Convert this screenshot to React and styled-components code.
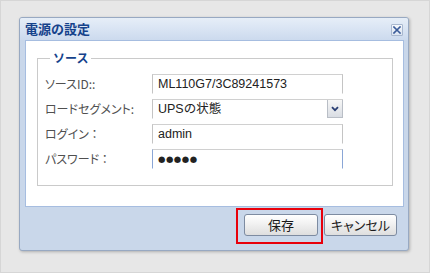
import React from 'react';
import styled, { createGlobalStyle } from 'styled-components';

const GlobalStyle = createGlobalStyle`
  html, body {
    margin: 0;
    padding: 0;
    background: #e8e8e8;
  }
  body {
    font-family: "Liberation Sans", "Noto Sans CJK JP", sans-serif;
  }
`;

const Page = styled.div`
  box-sizing: border-box;
  width: 430px;
  height: 273px;
  padding: 16px 0 0 18px;
  background: #e7e7e7;
  border: 1px solid #d6d6d6;
`;

const Dialog = styled.div`
  box-sizing: border-box;
  width: 390px;
  height: 234px;
  display: flex;
  flex-direction: column;
  background: #c9d7ea;
  border: 1px solid #98a9c2;
  border-radius: 3px;
  box-shadow: 1px 1px 3px rgba(0, 0, 0, 0.25);
`;

const TitleBar = styled.div`
  height: 22px;
  display: flex;
  align-items: center;
  justify-content: space-between;
  padding: 0 5px 0 5px;
  background: linear-gradient(#e6eef8, #ccdaee);
  border-radius: 2px 2px 0 0;
`;

const Title = styled.div`
  font-family: "Noto Sans CJK JP", sans-serif;
  font-size: 13px;
  font-weight: bold;
  color: #15428b;
  line-height: 16px;
`;

const CloseButton = styled.div`
  box-sizing: border-box;
  width: 12px;
  height: 12px;
  margin-top: 1px;
  display: flex;
  align-items: center;
  justify-content: center;
  background: linear-gradient(#f4f7fb, #dbe4f1);
  border: 1px solid #a9b8cf;
  border-radius: 1px;
`;

const Body = styled.div`
  margin: 0 4px 0 5px;
  padding: 9px 10px 20px 11px;
  background: #fff;
  border: 1px solid #a6bde0;
`;

const Fieldset = styled.fieldset`
  margin: 0;
  padding: 8px 7px 16px 7px;
  border: 1px solid #cacaca;
`;

const Legend = styled.legend`
  margin-left: 5px;
  padding: 0 3px;
  font-family: "Noto Sans CJK JP", sans-serif;
  font-size: 12px;
  font-weight: bold;
  line-height: 16px;
  color: #15428b;
`;

const Form = styled.div`
  display: grid;
  grid-template-columns: 107px 191px;
  grid-auto-rows: 20px;
  row-gap: 5px;
  align-items: center;
`;

const Label = styled.div`
  font-family: "Noto Sans CJK JP", sans-serif;
  font-feature-settings: "palt";
  font-size: 12px;
  color: #505050;
  line-height: 20px;
  white-space: nowrap;
`;

const Field = styled.div`
  box-sizing: border-box;
  width: 191px;
  height: 20px;
  padding: 0 0 0 5px;
  font-family: ${(p) => (p.$masked ? '"DejaVu Sans", sans-serif' : '"Liberation Sans", "Noto Sans CJK JP", sans-serif')};
  font-size: ${(p) => (p.$masked ? '8.5px' : '12.5px')};
  letter-spacing: ${(p) => (p.$masked ? '0.5px' : '0')};
  line-height: 19px;
  color: #222;
  background: #fff;
  border: 1px solid #d0d0d0;
  border-bottom-color: #fff;
  border-left-color: ${(p) => (p.$focused ? '#8aa6d6' : '#c4c4c4')};
  border-right-color: ${(p) => (p.$focused ? '#8aa6d6' : '#c4c4c4')};
  white-space: nowrap;
  overflow: hidden;
`;

const Select = styled.div`
  box-sizing: border-box;
  width: 191px;
  height: 20px;
  display: flex;
  align-items: stretch;
  border: 1px solid #d0d0d0;
  border-bottom-color: #fff;
  border-left-color: #c4c4c4;
  border-right: none;
`;

const SelectValue = styled.div`
  flex: 1;
  padding-left: 5px;
  font-family: "Liberation Sans", "Noto Sans CJK JP", sans-serif;
  font-size: 12.5px;
  line-height: 19px;
  color: #222;
`;

const SelectTrigger = styled.div`
  box-sizing: border-box;
  width: 16px;
  display: flex;
  align-items: center;
  justify-content: center;
  background: linear-gradient(#f7f7f7, #d9dde3);
  border: 1px solid #b9bec6;
  border-top: none;
`;

const Footer = styled.div`
  flex: 1;
  display: flex;
  justify-content: flex-end;
  align-items: flex-start;
  gap: 6px;
  padding: 7px 11px 0 0;
`;

const Highlight = styled.div`
  position: relative;
  &::after {
    content: '';
    position: absolute;
    left: -8px;
    right: -5px;
    top: -6px;
    bottom: -8px;
    border: 2.5px solid #e8000b;
    pointer-events: none;
  }
`;

const Button = styled.button`
  box-sizing: border-box;
  width: ${(p) => p.$width}px;
  height: 22px;
  margin: 0;
  padding: 0;
  font-family: "Noto Sans CJK JP", sans-serif;
  font-feature-settings: "palt";
  font-size: 13px;
  color: #1a1a1a;
  background: linear-gradient(#ffffff, #f1f1f1 45%, #dedede);
  border: 1px solid #7d8ba1;
  border-radius: 3px;
  line-height: 18px;
`;

export default function App() {
  return (
    <>
      <GlobalStyle />
      <Page>
        <Dialog>
          <TitleBar>
            <Title>電源の設定</Title>
            <CloseButton>
              <svg width="8" height="8" viewBox="0 0 8 8">
                <path d="M1 1 L7 7 M7 1 L1 7" stroke="#3b5c9a" strokeWidth="1.6" strokeLinecap="square" />
              </svg>
            </CloseButton>
          </TitleBar>
          <Body>
            <Fieldset>
              <Legend>ソース</Legend>
              <Form>
                <Label>ソースID::</Label>
                <Field>ML110G7/3C89241573</Field>
                <Label>ロードセグメント:</Label>
                <Select>
                  <SelectValue>UPSの状態</SelectValue>
                  <SelectTrigger>
                    <svg width="8" height="6" viewBox="0 0 8 6">
                      <path d="M1 1.2 L4 4.2 L7 1.2" fill="none" stroke="#2a3f73" strokeWidth="1.8" />
                    </svg>
                  </SelectTrigger>
                </Select>
                <Label>ログイン ：</Label>
                <Field>admin</Field>
                <Label>パスワード ：</Label>
                <Field $masked $focused>●●●●●</Field>
              </Form>
            </Fieldset>
          </Body>
          <Footer>
            <Highlight>
              <Button $width={74}>保存</Button>
            </Highlight>
            <Button $width={73}>キャンセル</Button>
          </Footer>
        </Dialog>
      </Page>
    </>
  );
}
